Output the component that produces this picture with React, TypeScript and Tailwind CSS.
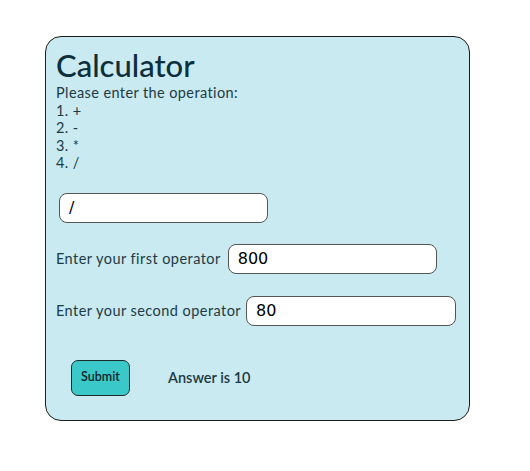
import { useState } from "react";

const App = () => {
  const [operation, setOperation] = useState("/");
  const [first, setFirst] = useState("800");
  const [second, setSecond] = useState("80");

  return (
    <div
      className="w-[530px] h-[471px] bg-white pt-[36px] pl-[45px]"
      style={{ fontFamily: 'Lato, "Noto Sans", sans-serif' }}
    >
      <div className="w-[425px] h-[385px] bg-[#c9eaf1] border border-[#1c1c1c] rounded-[16px] pl-[10px] pt-[9px]">
        <h1 className="text-[31px] leading-[38px] font-medium text-[#0d2e3b]">
          Calculator
        </h1>
        <div className="text-[14.5px] leading-[17.5px] tracking-[0.4px] text-[#1d3a44]">
          <p>Please enter the operation:</p>
          <p>1. +</p>
          <p>2. -</p>
          <p>3. *</p>
          <p>4. /</p>
        </div>

        <input
          value={operation}
          onChange={(e) => setOperation(e.target.value)}
          className="mt-[21px] ml-[3px] w-[209px] h-[30px] bg-white border-[1.5px] border-[#555] rounded-[8px] px-[9px] text-[16px] text-black outline-none"
          style={{ fontFamily: '"DejaVu Sans", sans-serif' }}
        />

        <div className="flex items-center mt-[21px] text-[14.5px] tracking-[0.45px] text-[#1d3a44]">
          <span>Enter your first operator</span>
          <input
            value={first}
            onChange={(e) => setFirst(e.target.value)}
            className="ml-[7px] w-[209px] h-[30px] bg-white border-[1.5px] border-[#555] rounded-[8px] px-[9px] text-[16px] tracking-normal text-black outline-none"
            style={{ fontFamily: '"DejaVu Sans", sans-serif' }}
          />
        </div>

        <div className="flex items-center mt-[22px] text-[14.5px] tracking-[0.45px] text-[#1d3a44]">
          <span>Enter your second operator</span>
          <input
            value={second}
            onChange={(e) => setSecond(e.target.value)}
            className="ml-[5px] w-[210px] h-[30px] bg-white border-[1.5px] border-[#555] rounded-[8px] px-[9px] text-[16px] tracking-normal text-black outline-none"
            style={{ fontFamily: '"DejaVu Sans", sans-serif' }}
          />
        </div>

        <div className="flex items-center mt-[34px] pl-[15px]">
          <button className="w-[59px] h-[36px] bg-[#3ac8c8] border-[1.5px] border-[#1c2a2c] rounded-[7px] text-[12.5px] font-semibold text-[#10252a]">
            Submit
          </button>
          <span className="ml-[38px] text-[14.5px] font-semibold text-[#1d3a44]">
            Answer is 10
          </span>
        </div>
      </div>
    </div>
  );
};

export default App;
